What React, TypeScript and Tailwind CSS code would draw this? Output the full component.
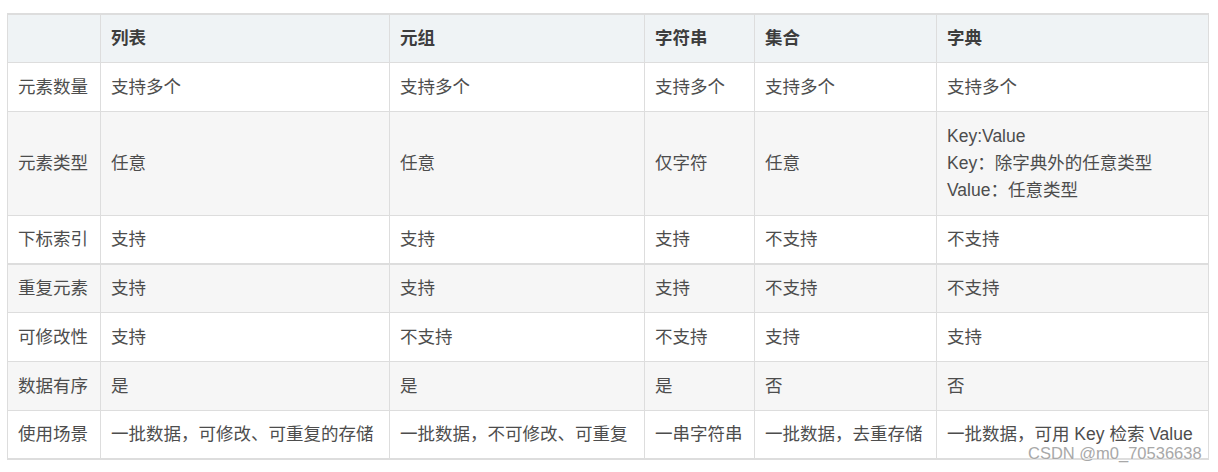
import React from "react";

const widths = ["w-[92px]", "w-[289px]", "w-[255px]", "w-[110px]", "w-[182px]", "w-[272px]"];

type Row = { cells: React.ReactNode[]; h: string; bg: string; top: string };

const rows: Row[] = [
  { cells: ["元素数量", "支持多个", "支持多个", "支持多个", "支持多个", "支持多个"], h: "h-[48px]", bg: "bg-white", top: "border-t" },
  {
    cells: [
      "元素类型",
      "任意",
      "任意",
      "仅字符",
      "任意",
      <div className="flex flex-col">
        <span>Key:Value</span>
        <span>Key：除字典外的任意类型</span>
        <span>Value：任意类型</span>
      </div>,
    ],
    h: "h-[103px]",
    bg: "bg-[#f6f6f6]",
    top: "border-t",
  },
  { cells: ["下标索引", "支持", "支持", "支持", "不支持", "不支持"], h: "h-[47px]", bg: "bg-white", top: "border-t" },
  { cells: ["重复元素", "支持", "支持", "支持", "不支持", "不支持"], h: "h-[47px]", bg: "bg-[#f6f6f6]", top: "border-t-2" },
  { cells: ["可修改性", "支持", "不支持", "不支持", "支持", "支持"], h: "h-[48px]", bg: "bg-white", top: "border-t" },
  { cells: ["数据有序", "是", "是", "是", "否", "否"], h: "h-[48px]", bg: "bg-[#f6f6f6]", top: "border-t" },
  {
    cells: ["使用场景", "一批数据，可修改、可重复的存储", "一批数据，不可修改、可重复", "一串字符串", "一批数据，去重存储", "一批数据，可用 Key 检索 Value"],
    h: "h-[47px]",
    bg: "bg-white",
    top: "border-t",
  },
];

const headers = ["", "列表", "元组", "字符串", "集合", "字典"];

export default function App() {
  return (
    <div
      className="relative w-[1218px] h-[472px] bg-white pl-[7px] pt-[13px] text-[17.5px] leading-[27px] text-[#4d4d4d]"
      style={{ fontFamily: '"Liberation Sans", "Noto Sans CJK SC", sans-serif' }}
    >
      <div className="w-[1202px] border-x border-t-2 border-b-2 border-[#dddddd]">
        <div className="flex h-[47px] bg-[#eff3f5] font-bold text-[#3d3d3d]">
          {headers.map((h, i) => (
            <div key={i} className={`${widths[i]} ${i > 0 ? "border-l" : ""} border-[#dddddd] flex items-center pl-[10px]`}>
              {h}
            </div>
          ))}
        </div>
        {rows.map((r, ri) => (
          <div key={ri} className={`flex ${r.top} border-[#dddddd] ${r.bg}`}>
            {r.cells.map((c, i) => (
              <div
                key={i}
                className={`${widths[i]} ${r.h} ${i > 0 ? "border-l" : ""} border-[#dddddd] flex items-center pl-[10px] whitespace-nowrap`}
              >
                {c}
              </div>
            ))}
          </div>
        ))}
      </div>
      <div
        className="absolute left-[1028px] top-[442px] text-[16.5px] leading-[22px] text-[#a8a8a8] whitespace-nowrap"
        style={{ textShadow: "0 0 2px #ffffff" }}
      >
        CSDN @m0_70536638
      </div>
    </div>
  );
}
